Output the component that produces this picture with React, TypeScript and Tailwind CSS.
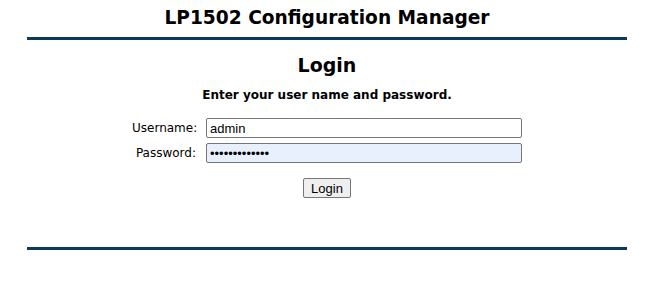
const verdana = { fontFamily: '"DejaVu Sans", Verdana, sans-serif' };
const arial = { fontFamily: '"Liberation Sans", Arial, sans-serif' };

const App = () => {
    return (
        <div className="w-[668px] h-[281px] bg-white text-black" style={verdana}>
            <div className="ml-[27px] w-[600px] flex flex-col items-center">
                <h1 className="mt-[6px] h-[24px] leading-[24px] text-[18.6px] font-bold">LP1502 Configuration Manager</h1>
                <div className="mt-[7px] w-full h-[3px] bg-[#0b3a5a]" />

                <h2 className="mt-[13px] h-[24px] leading-[24px] text-[19px] font-bold">Login</h2>
                <p className="mt-[10px] h-[16px] leading-[16px] text-[12px] font-bold">Enter your user name and password.</p>

                <form className="mt-[15px] flex flex-col gap-[5px]" onSubmit={(e) => e.preventDefault()}>
                    <div className="flex items-center">
                        <label className="w-[74px] pr-[10px] text-right text-[12px]">Username:</label>
                        <input
                            type="text"
                            defaultValue="admin"
                            className="w-[316px] h-[20px] px-[3px] border border-[#767676] rounded-[2px] text-[13px] bg-white outline-none"
                            style={arial}
                        />
                    </div>
                    <div className="flex items-center">
                        <label className="w-[74px] pr-[10px] text-right text-[12px]">Password:</label>
                        <input
                            type="password"
                            defaultValue="admin12345678"
                            className="w-[316px] h-[20px] px-[3px] border border-[#767676] rounded-[2px] text-[13px] bg-[#e8f0fe] outline-none"
                            style={arial}
                        />
                    </div>
                </form>

                <button
                    type="button"
                    className="mt-[15px] w-[48px] h-[20px] border border-[#767676] rounded-[2px] bg-[#efefef] text-[13px]"
                    style={arial}
                >
                    Login
                </button>

                <div className="mt-[49px] w-full h-[3px] bg-[#0b3a5a]" />
            </div>
        </div>
    );
};

export default App;
